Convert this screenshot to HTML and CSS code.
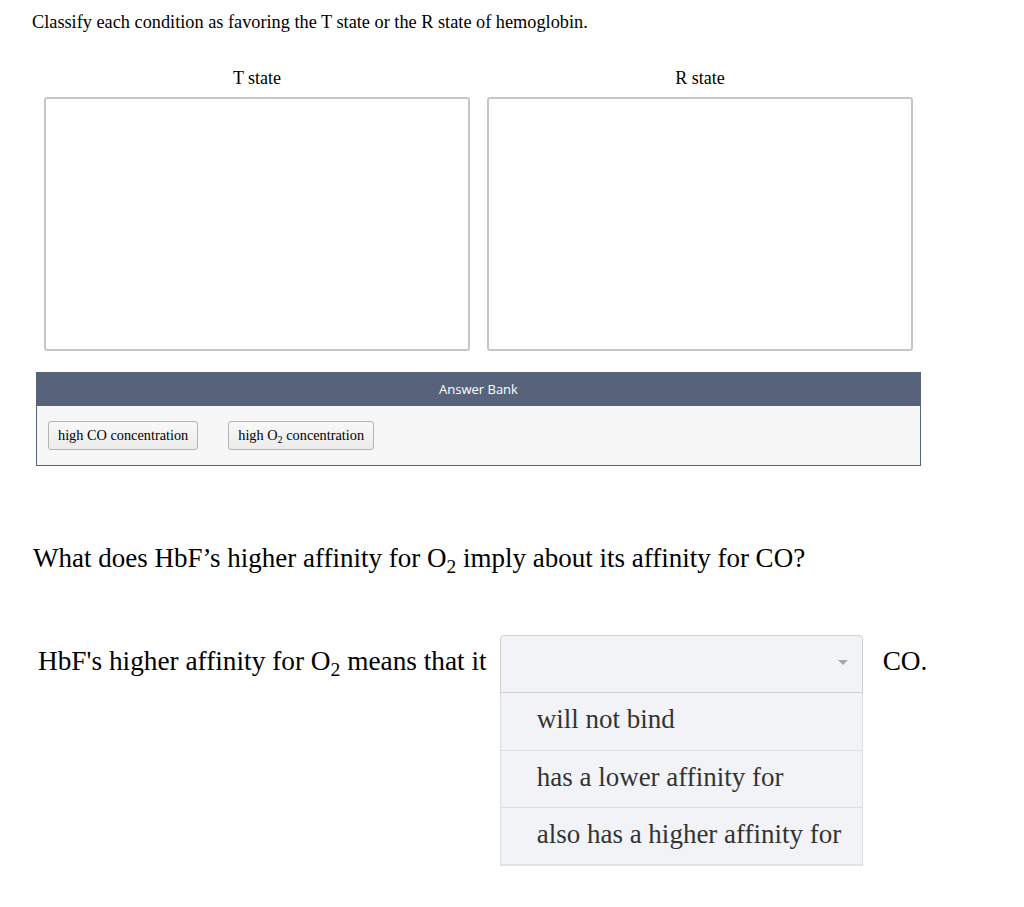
FILE: index.html
```html
<!DOCTYPE html>
<html lang="en">
<head>
<meta charset="utf-8">
<title>Hemoglobin states</title>
<link rel="stylesheet" href="styles.css">
</head>
<body>
<main class="page">
  <p class="prompt">Classify each condition as favoring the T state or the R state of hemoglobin.</p>

  <div class="bins">
    <section class="bin">
      <div class="bin-label">T state</div>
      <div class="bin-drop"></div>
    </section>
    <section class="bin">
      <div class="bin-label">R state</div>
      <div class="bin-drop"></div>
    </section>
  </div>

  <section class="bank">
    <header class="bank-head">Answer Bank</header>
    <div class="bank-body">
      <span class="chip">high CO concentration</span>
      <span class="chip">high O<sub>2</sub> concentration</span>
    </div>
  </section>

  <p class="question">What does HbF’s higher affinity for O<sub>2</sub> imply about its affinity for CO?</p>

  <div class="sentence">
    <span class="sentence-text">HbF's higher affinity for O<sub>2</sub> means that it</span>
    <div class="select">
      <div class="select-box"><span class="caret"></span></div>
      <ul class="menu">
        <li>will not bind</li>
        <li>has a lower affinity for</li>
        <li>also has a higher affinity for</li>
      </ul>
    </div>
    <span class="sentence-text">CO.</span>
  </div>
</main>
</body>
</html>
```

FILE: styles.css
```css
html, body {
  margin: 0;
  padding: 0;
  background: #ffffff;
}

body {
  font-family: "Liberation Serif", "Times New Roman", serif;
  color: #000;
}

.page {
  display: flex;
  flex-direction: column;
  align-items: flex-start;
  min-height: 907px;
  box-sizing: border-box;
}

.prompt {
  margin: 12px 0 0 32px;
  font-size: 18.3px;
  line-height: 20px;
}

/* drop targets */
.bins {
  display: flex;
  gap: 17px;
  margin: 36px 0 0 44px;
}

.bin {
  display: flex;
  flex-direction: column;
  width: 426px;
}

.bin-label {
  text-align: center;
  font-size: 18px;
  line-height: 20px;
  height: 20px;
}

.bin-drop {
  margin-top: 9px;
  height: 254px;
  box-sizing: border-box;
  border: 2px solid #c6c6c6;
  border-radius: 3px;
  background: #fff;
}

/* answer bank */
.bank {
  margin: 21px 0 0 36px;
  width: 885px;
  box-sizing: border-box;
  border: 1px solid #56637a;
}

.bank-head {
  background: #56637a;
  color: #fff;
  font-family: "Open Sans", "Liberation Sans", sans-serif;
  font-size: 13px;
  line-height: 33px;
  height: 33px;
  text-align: center;
}

.bank-body {
  background: #f7f7f7;
  height: 59px;
  box-sizing: border-box;
  padding: 15px 11px 0;
  display: flex;
  align-items: flex-start;
  gap: 30px;
}

.chip {
  display: inline-block;
  height: 29px;
  box-sizing: border-box;
  padding: 0 9px;
  border: 1px solid #b4b4b4;
  border-radius: 3px;
  background: linear-gradient(#f8f8f8, #ececec);
  font-size: 14.3px;
  line-height: 27px;
  white-space: nowrap;
}

/* follow-up question */
.question {
  margin: 77px 0 0 33px;
  font-size: 27px;
  line-height: 30px;
}

sub {
  font-size: 0.72em;
  line-height: 0;
  vertical-align: -0.3em;
}

.sentence {
  display: flex;
  align-items: flex-start;
  margin: 62px 0 0 38px;
}

.sentence-text {
  font-size: 27.3px;
  line-height: 52px;
  white-space: nowrap;
}

.select {
  position: relative;
  width: 363px;
  margin: 0 20px 0 13px;
}

.select-box {
  height: 58px;
  box-sizing: border-box;
  border: 1px solid #cfcfcf;
  border-radius: 4px 4px 0 0;
  background: #f2f3f7;
  position: relative;
}

.caret {
  position: absolute;
  right: 14px;
  top: 24px;
  width: 0;
  height: 0;
  border-left: 5px solid transparent;
  border-right: 5px solid transparent;
  border-top: 5px solid #a8a8a8;
}

.menu {
  position: absolute;
  left: 0;
  top: 58px;
  width: 363px;
  margin: 0;
  padding: 0;
  list-style: none;
  box-sizing: border-box;
  border: 1px solid #dcdde1;
  border-top: 0;
  border-bottom: 2px solid #e2e3e7;
  background: #f2f3f7;
}

.menu li {
  height: 57px;
  box-sizing: border-box;
  padding-left: 36px;
  font-size: 27px;
  line-height: 52px;
  color: #333;
  border-top: 1px solid #dcdde1;
}

.menu li:first-child {
  border-top: 0;
}
```
